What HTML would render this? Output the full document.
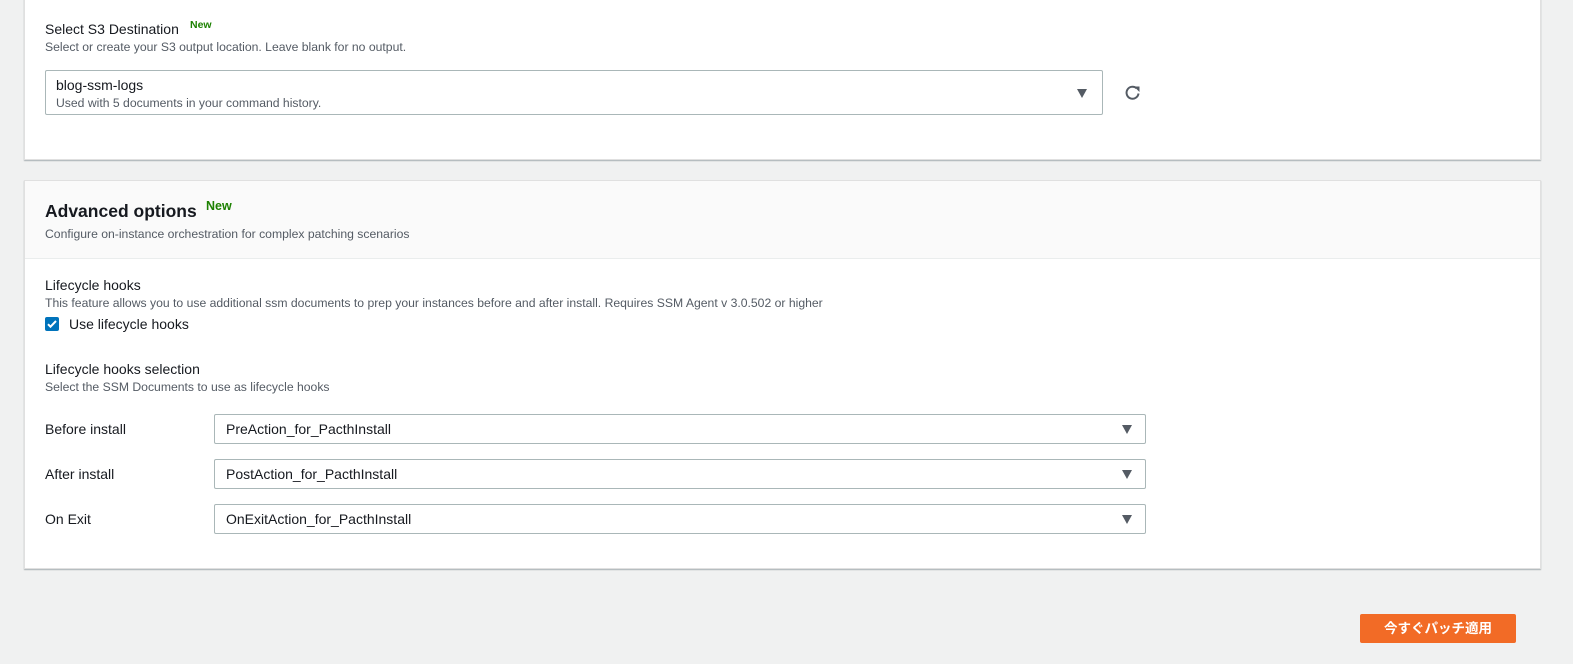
<!DOCTYPE html>
<html><head><meta charset="utf-8"><style>
*{box-sizing:border-box;margin:0;padding:0}
body{width:1573px;height:664px;background:#f0f1f1;font-family:"Liberation Sans","Noto Sans CJK JP",sans-serif;color:#16191f;position:relative;overflow:hidden}
.p{position:absolute;left:24px;width:1517px;background:#fff;border:1px solid #e0e0e0;box-shadow:0 1px 1px rgba(0,28,36,.3)}
.abs{position:absolute;white-space:nowrap}
.lbl{font-size:14px;color:#16191f}
.desc{font-size:12.2px;color:#545b64}
.new{font-size:10.5px;color:#1d8102;font-weight:bold}
.sel{position:absolute;border:1px solid #aab7b8;border-radius:2px;background:#fff}
.tri{position:absolute;width:0;height:0;border-left:5.5px solid transparent;border-right:5.5px solid transparent;border-top:9px solid #545b64}
</style></head><body>
<div class="p" style="top:-2px;height:162px">
 <div class="abs lbl" style="left:20px;top:22px">Select S3 Destination</div>
 <div class="abs new" style="left:165px;top:20px">New</div>
 <div class="abs desc" style="left:20px;top:41px">Select or create your S3 output location. Leave blank for no output.</div>
 <div class="sel" style="left:20px;top:71px;width:1058px;height:45px">
  <div class="abs lbl" style="left:10px;top:6px">blog-ssm-logs</div>
  <div class="abs desc" style="left:10px;top:25px">Used with 5 documents in your command history.</div>
  <div class="tri" style="left:1031px;top:18px"></div>
 </div>
 <svg class="abs" style="left:1098px;top:84px" width="20" height="20" viewBox="0 0 20 20"><path d="M15.5 10.5A6 6 0 1 1 13.5 5.2" fill="none" stroke="#545b64" stroke-width="2"/><path d="M11 3.5L16.5 3.5 16.5 9z" fill="#545b64"/></svg>
</div>
<div class="p" style="top:180px;height:389px">
 <div style="height:78px;background:#fafafa;border-bottom:1px solid #eaeded;position:relative">
  <div class="abs" style="left:20px;top:20px;font-size:17.5px;font-weight:bold">Advanced options</div>
  <div class="abs new" style="left:181px;top:18px;font-size:12.5px">New</div>
  <div class="abs desc" style="left:20px;top:46px">Configure on-instance orchestration for complex patching scenarios</div>
 </div>
 <div class="abs lbl" style="left:20px;top:96px">Lifecycle hooks</div>
 <div class="abs desc" style="left:20px;top:115px">This feature allows you to use additional ssm documents to prep your instances before and after install. Requires SSM Agent v 3.0.502 or higher</div>
 <div class="abs" style="left:20px;top:136px;width:14px;height:14px;background:#0073bb;border-radius:2px"><svg width="14" height="14" viewBox="0 0 14 14"><path d="M3 7.2l2.5 2.5L11 4" fill="none" stroke="#fff" stroke-width="2"/></svg></div>
 <div class="abs lbl" style="left:44px;top:135px">Use lifecycle hooks</div>
 <div class="abs lbl" style="left:20px;top:180px">Lifecycle hooks selection</div>
 <div class="abs desc" style="left:20px;top:199px">Select the SSM Documents to use as lifecycle hooks</div>
 <div class="abs lbl" style="left:20px;top:240px">Before install</div>
 <div class="sel" style="left:189px;top:233px;width:932px;height:30px"><div class="abs lbl" style="left:11px;top:6px">PreAction_for_PacthInstall</div><div class="tri" style="left:907px;top:10px"></div></div>
 <div class="abs lbl" style="left:20px;top:285px">After install</div>
 <div class="sel" style="left:189px;top:278px;width:932px;height:30px"><div class="abs lbl" style="left:11px;top:6px">PostAction_for_PacthInstall</div><div class="tri" style="left:907px;top:10px"></div></div>
 <div class="abs lbl" style="left:20px;top:330px">On Exit</div>
 <div class="sel" style="left:189px;top:323px;width:932px;height:30px"><div class="abs lbl" style="left:11px;top:6px">OnExitAction_for_PacthInstall</div><div class="tri" style="left:907px;top:10px"></div></div>
</div>
<div class="abs" style="left:1360px;top:614px;width:156px;height:29px;background:#f26b26;border-radius:2px;color:#fff;font-weight:bold;font-size:13.5px;text-align:center;line-height:29px">今すぐパッチ適用</div>
</body></html>
